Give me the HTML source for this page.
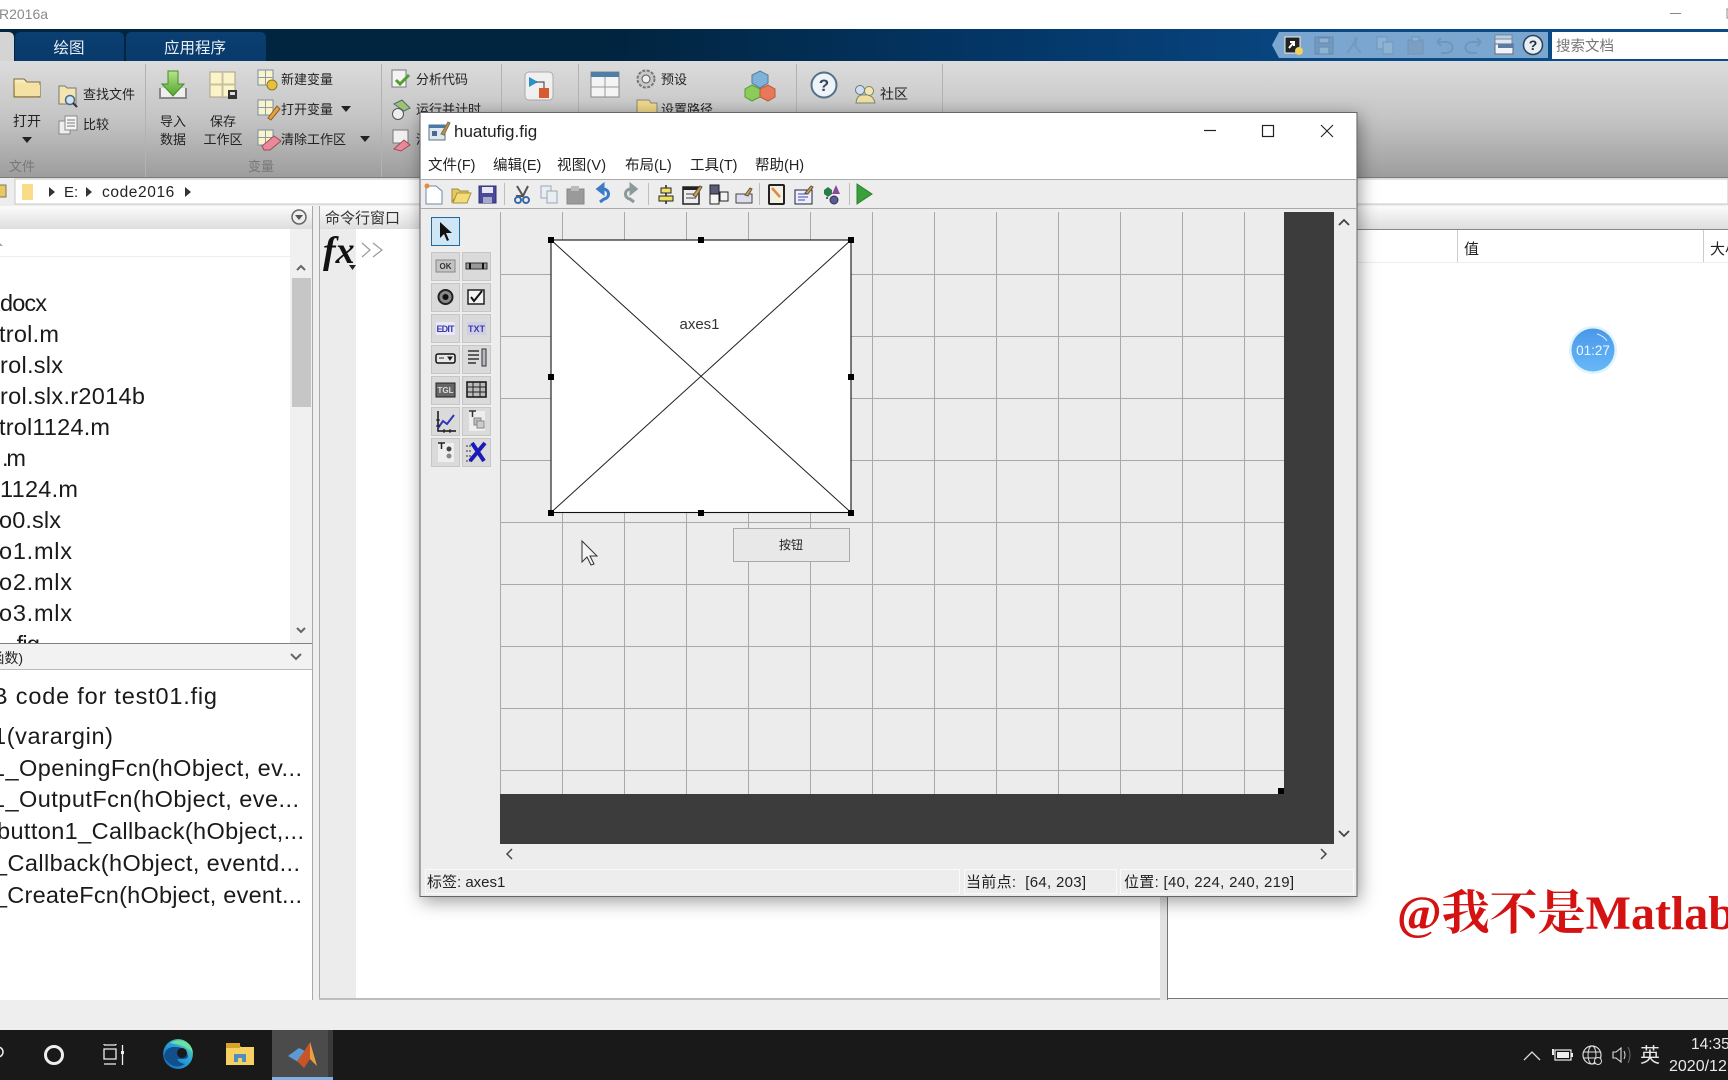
<!DOCTYPE html>
<html><head><meta charset="utf-8"><title>MATLAB R2016a</title>
<style>
html,body{margin:0;padding:0;width:1728px;height:1080px;overflow:hidden;background:#fff}
svg{display:block;position:absolute;left:0;top:0}
text{font-family:"Liberation Sans","Noto Sans CJK SC",sans-serif;fill:#222}
.r{font-size:13px;fill:#222}
.f{font-size:23.5px;fill:#1a1a1a}
.m{font-size:14.5px;fill:#222}
.s{font-size:15px;fill:#222}
.c{text-anchor:middle}
</style></head><body>
<svg width="1728" height="1080" viewBox="0 0 1728 1080" xmlns="http://www.w3.org/2000/svg">
<defs>
<linearGradient id="blue" x1="0" x2="1" y1="0" y2="0"><stop offset="0" stop-color="#01243f"/><stop offset=".35" stop-color="#01243f"/><stop offset=".6" stop-color="#04386a"/><stop offset=".8" stop-color="#0a4a87"/><stop offset="1" stop-color="#0a4a87"/></linearGradient>
<linearGradient id="rib" x1="0" x2="0" y1="0" y2="1"><stop offset="0" stop-color="#dcdcdc"/><stop offset=".5" stop-color="#c4c4c4"/><stop offset="1" stop-color="#9d9d9d"/></linearGradient>
<linearGradient id="hd" x1="0" x2="0" y1="0" y2="1"><stop offset="0" stop-color="#fbfbfb"/><stop offset="1" stop-color="#dedede"/></linearGradient>
<linearGradient id="tab" x1="0" x2="0" y1="0" y2="1"><stop offset="0" stop-color="#0b3f72"/><stop offset="1" stop-color="#083a6b"/></linearGradient>
<linearGradient id="yl" x1="0" x2="0" y1="0" y2="1"><stop offset="0" stop-color="#fdf3c4"/><stop offset="1" stop-color="#e0b85a"/></linearGradient>
<linearGradient id="gr" x1="0" x2="0" y1="0" y2="1"><stop offset="0" stop-color="#b7e58a"/><stop offset="1" stop-color="#4fa52d"/></linearGradient>
<linearGradient id="tm" x1="0" x2="0" y1="0" y2="1"><stop offset="0" stop-color="#4a97ea"/><stop offset="1" stop-color="#67b8f8"/></linearGradient>
<linearGradient id="edge" x1="0" x2="1" y1="1" y2="0"><stop offset="0" stop-color="#0f66b8"/><stop offset=".6" stop-color="#2da6d8"/><stop offset="1" stop-color="#72e08c"/></linearGradient>
<filter id="sh" x="-10%" y="-10%" width="120%" height="120%"><feDropShadow dx="2" dy="4" stdDeviation="9" flood-color="#000" flood-opacity=".4"/></filter>
<clipPath id="fl"><rect x="0" y="229" width="290" height="414"/></clipPath>
<clipPath id="fn"><rect x="0" y="670" width="312" height="330"/></clipPath>
<clipPath id="ed"><circle cx="178" cy="1054" r="15"/></clipPath>
</defs>

<!-- title bar -->
<rect width="1728" height="29" fill="#fff"/>
<text x="-1" y="19" font-size="14" style="fill:#8a8a8a">R2016a</text>
<rect x="1670" y="13" width="11" height="1" fill="#888"/>
<rect x="1727" y="9" width="3" height="9" fill="none" stroke="#888"/>

<!-- blue bar -->
<rect y="29" width="1728" height="32" fill="url(#blue)"/>
<path d="M-2 61V32H8Q14 32 14 38V61Z" fill="#d4d4d4"/>
<path d="M15 61V38Q15 32 21 32H118Q124 32 124 38V61Z" fill="url(#tab)"/>
<path d="M126 61V38Q126 32 132 32H260Q266 32 266 38V61Z" fill="url(#tab)"/>
<text x="69" y="53" font-size="15.5" class="c" style="fill:#e8eef5">绘图</text>
<text x="195" y="53" font-size="15.5" class="c" style="fill:#e8eef5">应用程序</text>

<!-- quick access -->
<path d="M1272 45L1279 32H1548V58H1279Z" fill="#7ba6cf"/>
<g>
<rect x="1285" y="37" width="15" height="16" fill="#222" stroke="#eee"/><path d="M1289 48l5-6m-4 0h4v4" stroke="#fff" stroke-width="2" fill="none"/><circle cx="1299" cy="51" r="4" fill="#f0d060"/>
<g opacity=".6">
<g fill="#6f93b5" stroke="#55789a"><rect x="1315" y="37" width="18" height="17"/><rect x="1319" y="38" width="10" height="5" fill="#9cbad6"/><rect x="1319" y="47" width="10" height="7" fill="#9cbad6"/></g>
<path d="M1347 53l6-8 3-7 1 0-2 8 6 7" stroke="#6f93b5" stroke-width="2" fill="none"/>
<g fill="#9cbad6" stroke="#6a8cae"><rect x="1377" y="37" width="10" height="12"/><rect x="1383" y="42" width="10" height="12"/></g>
<g fill="#7c9cbc" stroke="#6a8cae"><rect x="1408" y="40" width="15" height="14"/><rect x="1412" y="37" width="7" height="4" fill="#9cbad6"/></g>
<path d="M1437 42h9a6 5 0 0 1 0 11h-5M1437 42l4-4m-4 4l4 4" stroke="#6a8cae" stroke-width="2" fill="none"/>
<path d="M1481 42h-9a6 5 0 0 0 0 11h5M1481 42l-4-4m4 4l-4 4" stroke="#6a8cae" stroke-width="2" fill="none"/>
</g>
<rect x="1495" y="35" width="17" height="5" fill="#bcd0e4" stroke="#789"/><rect x="1495" y="39" width="17" height="6" fill="#dde8f2" stroke="#789"/><rect x="1495" y="44" width="18" height="10" fill="#eef3f8" stroke="#667"/><rect x="1498" y="44" width="15" height="4" fill="#5a7ca4"/>
<circle cx="1533" cy="45" r="9.5" fill="#e8eef4" stroke="#2c4258" stroke-width="1.5"/><text x="1533" y="50" font-size="14" font-weight="bold" class="c" style="fill:#1e2e40">?</text>
</g>
<rect x="1552" y="32" width="176" height="27" fill="#fff"/>
<text x="1556" y="51" font-size="14.5" style="fill:#777">搜索文档</text>

<!-- ribbon -->
<rect y="61" width="1728" height="116" fill="url(#rib)"/>
<g fill="#b2b2b2"><rect x="145" y="64" width="1" height="113"/><rect x="381" y="64" width="1" height="113"/><rect x="501" y="64" width="1" height="113"/><rect x="578" y="64" width="1" height="113"/><rect x="796" y="64" width="1" height="113"/><rect x="942" y="64" width="1" height="113"/></g>
<text x="22" y="171" class="r c" style="fill:#777">文件</text>
<text x="261" y="171" class="r c" style="fill:#777">变量</text>

<!-- 打开 -->
<path d="M14 79h10l3 3h13v15H14Z" fill="url(#yl)" stroke="#7a6a3a"/><rect x="15" y="85" width="25" height="11" fill="#f4e2a4"/>
<text x="27" y="126" class="r c" style="font-size:14px">打开</text>
<path d="M22 137h10l-5 6Z" fill="#222"/>
<!-- 查找文件 -->
<path d="M59 86h6l2 2h9v16H59Z" fill="#f4e4b0" stroke="#777"/><circle cx="70" cy="100" r="4.5" fill="#cfe4f4" stroke="#4a6a88" stroke-width="1.5"/><path d="M73 103l4 4" stroke="#333" stroke-width="2"/>
<text x="83" y="99" class="r">查找文件</text>
<!-- 比较 -->
<rect x="59" y="121" width="11" height="13" fill="#eee" stroke="#888"/><rect x="65" y="116" width="12" height="14" fill="#f6f6f6" stroke="#888"/><path d="M67 120h8M67 123h8M67 126h8" stroke="#777"/>
<text x="83" y="129" class="r">比较</text>
<!-- 导入数据 -->
<path d="M160 88v10h26V88" fill="#eee" stroke="#888" stroke-width="2"/><path d="M168 71h10v13h6l-11 12-11-12h6Z" fill="url(#gr)" stroke="#4a8a2a"/>
<text x="173" y="126" class="r c">导入</text><text x="173" y="144" class="r c">数据</text>
<!-- 保存 -->
<rect x="210" y="72" width="25" height="25" fill="#fbf4c8" stroke="#a8a08a"/><path d="M222.500 72v25M210 84.500h25" stroke="#c8c0a0" stroke-width="2"/><rect x="228" y="90" width="9" height="9" fill="#333"/><rect x="230" y="92" width="5" height="3" fill="#ddd"/>
<text x="223" y="126" class="r c">保存</text><text x="223" y="144" class="r c">工作区</text>
<!-- vars -->
<g fill="#fbf4c8" stroke="#7a8ea8"><rect x="258" y="70" width="15" height="15"/><rect x="258" y="100" width="15" height="15"/><rect x="258" y="130" width="15" height="15"/></g>
<path d="M265.500 70v15M258 77.500h15M265.500 100v15M258 107.500h15M265.500 130v15M258 137.500h15" stroke="#8a9ab0"/>
<circle cx="272" cy="85" r="5" fill="#e8c040" stroke="#8a7a20"/>
<path d="M268 118l9-12 3 3-9 11Z" fill="#e8a040" stroke="#8a6020"/>
<path d="M262 146l12-10 7 5-11 9h-6Z" fill="#e88a9a" stroke="#a04a5a"/>
<text x="281" y="84" class="r">新建变量</text>
<text x="281" y="114" class="r">打开变量</text>
<text x="281" y="144" class="r">清除工作区</text>
<path d="M341 106h10l-5 6Z" fill="#222"/><path d="M360 136h10l-5 6Z" fill="#222"/>
<!-- code -->
<rect x="392" y="70" width="14" height="17" fill="#f4f4f4" stroke="#777"/><path d="M396 80l4 4 9-9" stroke="#50a030" stroke-width="3" fill="none"/>
<path d="M394 104l8-4 8 8-6 3Z" fill="#9cc470" stroke="#567"/><circle cx="398" cy="114" r="5.500" fill="#eee" stroke="#555"/>
<rect x="393" y="130" width="15" height="13" fill="#f0f0f0" stroke="#777"/><path d="M394 149l10-9 6 5-9 6Z" fill="#e88a9a" stroke="#a04a5a"/>
<text x="416" y="84" class="r">分析代码</text>
<text x="416" y="114" class="r">运行并计时</text>
<text x="416" y="144" class="r">清除命令</text>
<!-- simulink -->
<rect x="525" y="72" width="28" height="28" rx="4" fill="#f0f0f0" stroke="#aaa"/><path d="M529 77l9 5-9 5Z" fill="#2a90c8"/><path d="M536 82h8v6" stroke="#333" fill="none"/><rect x="539" y="88" width="10" height="10" fill="#d85a30"/>
<!-- layout -->
<rect x="591" y="72" width="28" height="25" fill="#f4f4f4" stroke="#888"/><rect x="591" y="72" width="28" height="5" fill="#4f7ea8"/><path d="M605 77v20M591 87h28" stroke="#999"/>
<!-- prefs -->
<circle cx="646" cy="79" r="8.500" fill="#c8c8c8" stroke="#777" stroke-width="2" stroke-dasharray="3 1.500"/><circle cx="646" cy="79" r="4" fill="#eee" stroke="#555"/>
<text x="661" y="84" class="r">预设</text>
<path d="M637 100h12l2 3h6v10h-20Z" fill="#f0d88a" stroke="#887"/>
<text x="661" y="114" class="r">设置路径</text>
<!-- cubes -->
<path d="M760 71l8 4v8l-8 5-8-5v-8Z" fill="#7fb2d8" stroke="#57789a"/><path d="M752 85l8 4v8l-8 4-7-4v-8Z" fill="#8ccc58" stroke="#589a38"/><path d="M768 85l7 4v8l-7 4-8-4v-8Z" fill="#e8785a" stroke="#b8583a"/>
<!-- help -->
<circle cx="824" cy="85" r="12.500" fill="#eef3f7" stroke="#54708a" stroke-width="2"/><text x="824" y="91" font-size="17" font-weight="bold" class="c" style="fill:#33475c">?</text>
<!-- community -->
<circle cx="860" cy="90" r="4.500" fill="#cfe0f0" stroke="#678"/><circle cx="869" cy="91" r="4.500" fill="#f4e4b0" stroke="#786"/><path d="M856 103q1-9 8-8 9-1 11 8Z" fill="#f0e0a0" stroke="#787"/>
<text x="880" y="99" class="r" style="font-size:14px">社区</text>

<!-- address bar -->
<rect y="177" width="1728" height="1" fill="#7c7c7c"/>
<rect y="178" width="1728" height="28" fill="#ededed"/>
<rect x="15" y="179" width="1713" height="25" fill="#fff" stroke="#c8c8c8"/>
<rect x="-6" y="185" width="12" height="12" fill="#e8c860" stroke="#776"/>
<rect x="22" y="184" width="11" height="16" fill="#f8dc88"/>
<path d="M49 187l6 5-6 5Z M86 187l6 5-6 5Z M185 187l6 5-6 5Z" fill="#333"/>
<text x="64" y="197" font-size="15" style="fill:#222">E:</text>
<text x="102" y="197" font-size="15.5" letter-spacing=".6" style="fill:#222">code2016</text>

<!-- background area -->
<rect y="206" width="1728" height="824" fill="#efefef"/>

<!-- left pane -->
<rect y="206" width="312" height="23" fill="url(#hd)"/>
<rect y="229" width="312" height="771" fill="#fff"/>
<rect x="312" y="206" width="1" height="794" fill="#a8a8a8"/>
<circle cx="299" cy="217" r="7" fill="#eee" stroke="#666" stroke-width="1.500"/><path d="M295 215h8l-4 5Z" fill="#555"/>
<rect x="290" y="229" width="22" height="414" fill="#f0f0f0"/>
<rect y="256" width="292" height="1" fill="#eee"/>
<rect x="292" y="278" width="19" height="129" fill="#c6c6c6"/>
<path d="M297 270l4-4 4 4M297 628l4 4 4-4" stroke="#666" stroke-width="2" fill="none"/>
<path d="M0 243l3 3h-3Z" fill="#aaa"/>
<g clip-path="url(#fl)">
<text x="0" y="311" class="f" textLength="47">docx</text>
<text x="-1" y="342" class="f" textLength="60">trol.m</text>
<text x="0" y="373" class="f" textLength="63">rol.slx</text>
<text x="0" y="404" class="f" textLength="145">rol.slx.r2014b</text>
<text x="-1" y="435" class="f" textLength="111">trol1124.m</text>
<text x="2" y="466" class="f" textLength="24">.m</text>
<text x="0" y="497" class="f" textLength="78">1124.m</text>
<text x="-1" y="528" class="f" textLength="62">o0.slx</text>
<text x="-1" y="559" class="f" textLength="73">o1.mlx</text>
<text x="-1" y="590" class="f" textLength="73">o2.mlx</text>
<text x="-1" y="621" class="f" textLength="73">o3.mlx</text>
<text x="5" y="652" class="f" textLength="35">. fig</text>
</g>
<rect y="643" width="312" height="1" fill="#808080"/>
<rect y="644" width="312" height="25" fill="#f2f2f2"/>
<rect y="669" width="312" height="1" fill="#bbb"/>
<text x="23" y="663" font-size="14" text-anchor="end">函数)</text>
<path d="M291 654l5 5 5-5" stroke="#666" stroke-width="2" fill="none"/>
<g clip-path="url(#fn)">
<text x="-8" y="704" class="f" textLength="225">B code for test01.fig</text>
<text x="-7" y="744" class="f" textLength="120">1(varargin)</text>
<text x="-8" y="776" class="f" textLength="310">1_OpeningFcn(hObject, ev...</text>
<text x="-8" y="807" class="f" textLength="307">1_OutputFcn(hObject, eve...</text>
<text x="-3" y="839" class="f" textLength="307">button1_Callback(hObject,...</text>
<text x="-6" y="871" class="f" textLength="306">_Callback(hObject, eventd...</text>
<text x="-6" y="903" class="f" textLength="308">_CreateFcn(hObject, event...</text>
</g>
<rect y="1000" width="1728" height="30" fill="#eee"/>

<!-- command window -->
<rect x="319" y="206" width="841" height="23" fill="url(#hd)"/>
<rect x="319" y="206" width="1" height="794" fill="#aaa"/>
<text x="325" y="223" class="s" style="fill:#333">命令行窗口</text>
<rect x="320" y="229" width="36" height="771" fill="#ececec"/>
<rect x="356" y="229" width="804" height="771" fill="#fff"/>
<text x="323" y="263" font-size="38" font-weight="bold" font-style="italic" style="font-family:'Liberation Serif',serif;fill:#111">fx</text>
<path d="M349 265h7l-3.500 5Z" fill="#222"/>
<path d="M362 243l8 7-8 7M373 243l9 7-9 7" stroke="#9a9a9a" stroke-width="1.200" fill="none"/>
<rect x="1160" y="206" width="7" height="794" fill="#e2e2e2"/>
<rect x="319" y="998" width="841" height="2" fill="#bdbdbd"/>

<!-- workspace -->
<rect x="1167" y="206" width="561" height="23" fill="url(#hd)"/>
<rect x="1167" y="229" width="561" height="1" fill="#888"/>
<rect x="1167" y="230" width="561" height="768" fill="#fff"/>
<rect x="1167" y="206" width="1" height="794" fill="#777"/>
<rect x="1167" y="998" width="561" height="1" fill="#777"/>
<rect x="1167" y="262" width="561" height="1" fill="#eee"/>
<rect x="1457" y="230" width="1" height="32" fill="#ccc"/>
<rect x="1703" y="230" width="1" height="32" fill="#ccc"/>
<text x="1464" y="254" class="s">值</text>
<text x="1710" y="254" class="s">大小</text>

<!-- timer -->
<circle cx="1593" cy="350" r="24" fill="#dff4fb"/>
<circle cx="1593" cy="350" r="21.500" fill="url(#tm)"/>
<path d="M1597 334q7 2 10 7" stroke="#d8ecfc" stroke-width="1" fill="none"/>
<text x="1593" y="355" font-size="13.500" class="c" style="fill:#eef8ff">01:27</text>

<!-- watermark -->
<text x="1397" y="929" font-size="48" font-weight="bold" style="font-family:'Liberation Serif','Noto Serif CJK SC',serif;fill:#d41212">@我不是Matlab</text>

<!-- dialog -->
<rect x="420" y="112.500" width="937" height="784" fill="#ededed" stroke="#666" filter="url(#sh)"/>
<rect x="421" y="113" width="935" height="66" fill="#fff"/>
<rect x="421" y="179" width="935" height="1" fill="#aaa"/>
<rect x="421" y="208" width="935" height="1" fill="#aaa"/>
<!-- title icon -->
<rect x="429" y="125" width="16" height="15" fill="#dfe8f0" stroke="#56708a"/><rect x="429" y="125" width="16" height="3" fill="#4a78a8"/><rect x="432" y="131" width="5" height="5" fill="#4a6a8a"/><path d="M441 134l7-12 2 1-6 12Z" fill="#c88a40" stroke="#775"/>
<text x="454" y="137" font-size="17" style="fill:#222">huatufig.fig</text>
<path d="M1204 130.500h12" stroke="#222" stroke-width="1.200"/>
<rect x="1262.500" y="125.500" width="11" height="11" fill="none" stroke="#222" stroke-width="1.200"/>
<path d="M1321 125l12 12M1333 125l-12 12" stroke="#222" stroke-width="1.100"/>
<!-- menu -->
<text x="428" y="170" class="m">文件(F)</text>
<text x="493" y="170" class="m">编辑(E)</text>
<text x="557" y="170" class="m" letter-spacing=".2">视图(V)</text>
<text x="625" y="170" class="m">布局(L)</text>
<text x="690" y="170" class="m">工具(T)</text>
<text x="755" y="170" class="m">帮助(H)</text>
<!-- toolbar -->
<g fill="#bdbdbd"><rect x="504" y="183" width="1" height="22"/><rect x="648" y="183" width="1" height="22"/><rect x="759" y="183" width="1" height="22"/><rect x="849" y="183" width="1" height="22"/></g>
<path d="M426 186h10l6 5v13h-16Z" fill="#fff" stroke="#6a8aaa"/><circle cx="427" cy="186" r="2.500" fill="#e88a3a"/>
<path d="M452 189h6l2 2h8v3h-10l-6 8Z" fill="#e8c860" stroke="#9a8a40"/><path d="M453 203l4-10h14l-4 10Z" fill="#f4dc78" stroke="#a8903a"/>
<rect x="479" y="186" width="17" height="17" fill="#4a4a9a" stroke="#303070"/><rect x="482" y="187" width="11" height="6" fill="#e8e8f4"/><rect x="483" y="197" width="9" height="6" fill="#a8a8c8"/>
<path d="M517 186l6 10 5-10M516 196l7 0" stroke="#555" stroke-width="2" fill="none"/><circle cx="518" cy="200" r="3" fill="none" stroke="#3a6aa8" stroke-width="2"/><circle cx="526" cy="200" r="3" fill="none" stroke="#3a6aa8" stroke-width="2"/>
<g fill="#e8eef4" stroke="#9aa8b4"><rect x="541" y="186" width="10" height="12"/><rect x="547" y="191" width="10" height="12"/></g>
<rect x="567" y="189" width="17" height="15" fill="#9a9a9a" stroke="#888"/><rect x="571" y="186" width="8" height="5" fill="#bbb"/>
<path d="M598 189h5a5 5 0 0 1 1 10l-4 3M598 189l5-4v8Z" stroke="#3a7ac8" stroke-width="3" fill="none"/>
<path d="M636 189h-5a5 5 0 0 0-1 10l4 3M636 189l-5-4v8Z" stroke="#8a9a9a" stroke-width="3" fill="none"/>
<path d="M666 185v19" stroke="#222" stroke-width="1.500"/><rect x="661" y="188" width="10" height="5" fill="#f0e060" stroke="#222"/><rect x="659" y="196" width="14" height="5" fill="#f0e060" stroke="#222"/>
<rect x="683" y="187" width="16" height="17" fill="#eee" stroke="#222" stroke-width="1.500"/><rect x="683" y="187" width="16" height="3" fill="#222"/><path d="M686 194h10M686 198h10" stroke="#444"/><path d="M693 195l7-9 2 1-6 10Z" fill="#c8a050" stroke="#654"/>
<rect x="710" y="185" width="9" height="9" fill="#5a5a7a" stroke="#222"/><rect x="710" y="194" width="9" height="10" fill="#f4f4f4" stroke="#222"/><rect x="720" y="192" width="8" height="9" fill="#f4f4f4" stroke="#222"/>
<rect x="736" y="194" width="16" height="9" fill="#dde" stroke="#444"/><path d="M745 195l5-7 2 1-4 7Z" fill="#c8a050" stroke="#654"/>
<rect x="769" y="185" width="15" height="19" rx="1" fill="#f4f0e0" stroke="#222" stroke-width="2"/><path d="M772 188l8 9" stroke="#d88a4a" stroke-width="2.500"/>
<rect x="795" y="190" width="17" height="14" fill="#eef" stroke="#223"/><path d="M798 194h10M798 197h10M798 200h7" stroke="#3a4aa8"/><path d="M805 193l6-7 2 1-5 7Z" fill="#c8a050" stroke="#654"/>
<path d="M824 190l4-3 4 3v4l-4 3-4-3Z" fill="#2a7a4a"/><path d="M836 185l4 9h-8Z" fill="#8a4a9a"/><circle cx="834" cy="200" r="4" fill="#5a5a9a" stroke="#334"/><circle cx="827" cy="198" r="1" fill="#333"/>
<path d="M857 184l15 10-15 10Z" fill="#3aa03a" stroke="#2a802a"/>

<!-- palette -->
<rect x="431.500" y="217.500" width="28" height="28" fill="#cfe6f7" stroke="#1f6a9a"/>
<path d="M440 222v16l4-4 3 7 2-1-3-7h6Z" fill="#111"/>
<g fill="#dadada" stroke="#c6c6c6">
<rect x="431.500" y="252.500" width="28" height="28"/><rect x="462.500" y="252.500" width="28" height="28"/>
<rect x="431.500" y="283.500" width="28" height="28"/><rect x="462.500" y="283.500" width="28" height="28"/>
<rect x="431.500" y="314.500" width="28" height="28"/><rect x="462.500" y="314.500" width="28" height="28"/>
<rect x="431.500" y="345.500" width="28" height="28"/><rect x="462.500" y="345.500" width="28" height="28"/>
<rect x="431.500" y="376.500" width="28" height="28"/><rect x="462.500" y="376.500" width="28" height="28"/>
<rect x="431.500" y="407.500" width="28" height="28"/><rect x="462.500" y="407.500" width="28" height="28"/>
<rect x="431.500" y="438.500" width="28" height="28"/><rect x="462.500" y="438.500" width="28" height="28"/>
</g>
<rect x="436" y="260" width="19" height="12" fill="#c4c4c4" stroke="#888"/><text x="445.500" y="269" font-size="8" font-weight="bold" class="c" style="fill:#333">OK</text>
<rect x="466" y="263" width="21" height="6" fill="#999" stroke="#333"/><path d="M470 263v6M483 263v6" stroke="#111" stroke-width="2"/>
<circle cx="445.500" cy="297" r="7" fill="#888" stroke="#222" stroke-width="2"/><circle cx="445.500" cy="297" r="3" fill="#111"/>
<rect x="468" y="290" width="16" height="14" fill="#f4f4f4" stroke="#222" stroke-width="1.500"/><path d="M471 297l3 4 8-10" stroke="#111" stroke-width="2" fill="none"/>
<rect x="436" y="322" width="19" height="13" fill="#e8e8f8"/><text x="445.500" y="332" font-size="9" font-weight="bold" textLength="18" class="c" style="fill:#3a3aa8">EDIT</text>
<rect x="467" y="322" width="19" height="13" fill="#cfcfe4"/><text x="476.500" y="332" font-size="9" font-weight="bold" class="c" style="fill:#3a3aa8">TXT</text>
<rect x="436" y="354" width="19" height="9" rx="2" fill="#e8e8e8" stroke="#111" stroke-width="1.500"/><path d="M439 358h5M448 357h4l-2 3Z" stroke="#222"/>
<path d="M468 351h11M468 355h11M468 359h11M468 363h8" stroke="#333" stroke-width="1.500"/><rect x="482" y="349" width="4" height="17" fill="#b8b8c8" stroke="#333"/>
<rect x="436" y="383" width="19" height="14" fill="#666" stroke="#222"/><text x="445.500" y="393" font-size="8" font-weight="bold" class="c" style="fill:#ddd">TGL</text>
<rect x="467" y="382" width="19" height="15" fill="#bbb" stroke="#111" stroke-width="1.500"/><path d="M467 387h19M467 392h19M473 382v15M480 382v15" stroke="#222"/>
<path d="M438 411v20h18" stroke="#111" stroke-width="1.500" fill="none"/><path d="M438 428l5-7 4 3 7-9" stroke="#2a3ab8" stroke-width="2" fill="none"/><path d="M436 426h4M436 420h4M444 429v4M450 429v4" stroke="#111"/>
<rect x="469" y="411" width="16" height="20" fill="#eee"/><path d="M469 411h7M472.500 411v6" stroke="#333" stroke-width="1.500"/><rect x="474" y="418" width="7" height="7" fill="#bbb" stroke="#888"/><rect x="477" y="421" width="7" height="7" fill="#ccc" stroke="#888"/>
<rect x="438" y="443" width="16" height="19" fill="#eee"/><path d="M438 443h7M441.500 443v6" stroke="#222" stroke-width="1.500"/><circle cx="449" cy="449" r="2.500" fill="#444"/><circle cx="449" cy="456" r="2.500" fill="#888"/>
<path d="M466 446h6M466 451h5M466 456h5M466 461h5" stroke="#333" stroke-dasharray="2 1"/><path d="M472 443l12 18M485 443l-15 18" stroke="#1a1ab8" stroke-width="4"/>

<!-- grid -->
<rect x="500.500" y="212" width="784" height="582" fill="#ececec"/>
<g stroke="#a9a9a9">
<path d="M500.500 212V794M562.500 212V794M624.500 212V794M686.500 212V794M748.500 212V794M810.500 212V794M872.500 212V794M934.500 212V794M996.500 212V794M1058.500 212V794M1120.500 212V794M1182.500 212V794M1244.500 212V794"/>
<path d="M500 274.500H1284M500 336.500H1284M500 398.500H1284M500 460.500H1284M500 522.500H1284M500 584.500H1284M500 646.500H1284M500 708.500H1284M500 770.500H1284"/>
</g>
<rect x="1284" y="212" width="50" height="632" fill="#3c3c3c"/>
<rect x="500" y="794" width="834" height="50" fill="#3c3c3c"/>
<rect x="1278" y="788" width="6" height="6" fill="#000"/>
<path d="M1339 225l5-5 5 5M1339 831l5 5 5-5" stroke="#444" stroke-width="1.800" fill="none"/>
<path d="M512 849l-5 5 5 5M1321 849l5 5-5 5" stroke="#444" stroke-width="1.500" fill="none"/>

<!-- axes -->
<rect x="551" y="240" width="300" height="272.500" fill="#fff" stroke="#111" stroke-width="1.100"/>
<path d="M551 240L851 512.500M851 240L551 512.500" stroke="#222" stroke-width="1"/>
<text x="699.500" y="329" font-size="15" class="c" style="fill:#333">axes1</text>
<g fill="#000"><rect x="548" y="237" width="6" height="6"/><rect x="698" y="237" width="6" height="6"/><rect x="848" y="237" width="6" height="6"/><rect x="548" y="374" width="6" height="6"/><rect x="848" y="374" width="6" height="6"/><rect x="548" y="510" width="6" height="6"/><rect x="698" y="510" width="6" height="6"/><rect x="848" y="510" width="6" height="6"/></g>
<!-- button -->
<rect x="733.500" y="528.500" width="116" height="33" fill="#e8e8e8" stroke="#aaa"/>
<text x="791" y="549" font-size="12" class="c" style="fill:#222">按钮</text>
<!-- cursor -->
<path d="M582 541v21l5-5 4 8 3-1-4-8h7Z" fill="#f4f4f4" stroke="#333"/>

<!-- status bar -->
<g fill="#ededed" stroke="#fafafa"><rect x="425.500" y="869.500" width="534" height="24"/><rect x="964.500" y="869.500" width="152" height="24"/><rect x="1120.500" y="869.500" width="233" height="24"/></g>
<text x="427" y="887" class="s">标签: axes1</text>
<text x="966" y="887" class="s" letter-spacing=".3">当前点:&#160; [64, 203]</text>
<text x="1124" y="887" class="s" letter-spacing=".3">位置: [40, 224, 240, 219]</text>

<!-- taskbar -->
<rect y="1030" width="1728" height="50" fill="#191919"/>
<circle cx="-2" cy="1052" r="5" fill="none" stroke="#eee" stroke-width="1.500"/>
<circle cx="54" cy="1055" r="8.500" fill="none" stroke="#eee" stroke-width="3"/>
<path d="M104 1045h12M104 1064h12M104 1049h12v10h-12ZM104 1045v-1M116 1045v-1" stroke="#eee" stroke-width="1.300" fill="none"/><path d="M122.500 1045v20" stroke="#eee" stroke-width="1.300"/><rect x="121" y="1051" width="3" height="3" fill="#eee"/>
<g clip-path="url(#ed)"><circle cx="178" cy="1054" r="15" fill="url(#edge)"/><path d="M164 1056q2-10 12-9 10 0 12 9 0 3-5 3h-6q2 4 8 5-8 5-15 0-6-5-6-8Z" fill="#11508c"/><circle cx="182" cy="1053" r="5" fill="#191919"/><path d="M170 1043q10-6 20 2 3 3 3 8-7-8-23-10Z" fill="#6ce0a0"/></g>
<path d="M226 1044h12l3 3h13v18h-28Z" fill="#f6d060"/><rect x="226" y="1043" width="14" height="5" fill="#d8a32a"/><path d="M234 1054h12v8h-12Z" fill="#4f8fc0"/><rect x="238" y="1058" width="4" height="7" fill="#f6d060"/>
<rect x="272" y="1030" width="61" height="50" fill="#4b4b4b"/><rect x="272" y="1077" width="61" height="3" fill="#7fb1e0"/>
<rect x="328" y="1030" width="5" height="47" fill="#3a3a3a"/>
<path d="M288 1056l11-8 6 3-7 11Z" fill="#5a9bd4"/><path d="M297 1061l8-11 5-8 7 24-7-7-6 9Z" fill="#c8552a"/><path d="M310 1042l7 24-7-7Z" fill="#e8a040"/>
<path d="M1524 1060l8-8 8 8" stroke="#ddd" stroke-width="1.300" fill="none"/>
<rect x="1555" y="1050" width="16" height="10" fill="#111" stroke="#eee" stroke-width="1.200"/><rect x="1557" y="1052" width="12" height="6" fill="#eee"/><rect x="1571" y="1053" width="2" height="4" fill="#eee"/><path d="M1553 1049v6" stroke="#eee" stroke-width="2"/>
<circle cx="1592" cy="1055" r="9" fill="none" stroke="#ddd" stroke-width="1.200"/><ellipse cx="1592" cy="1055" rx="4" ry="9" fill="none" stroke="#ddd"/><path d="M1583 1052h18M1583 1058h18" stroke="#ddd"/><circle cx="1598" cy="1061" r="3.500" fill="#191919" stroke="#ddd"/>
<path d="M1613 1052h3l5-4v14l-5-4h-3Z" fill="none" stroke="#ddd" stroke-width="1.100"/><path d="M1624 1051q2 4 0 8" stroke="#ddd" fill="none"/><path d="M1628 1047q4 8 0 16" stroke="#666" fill="none"/>
<text x="1650" y="1062" font-size="20" class="c" style="fill:#e8e8e8">英</text>
<text x="1691" y="1049" font-size="15.500" style="fill:#e8e8e8">14:35</text>
<text x="1669" y="1071" font-size="16" style="fill:#e8e8e8">2020/12</text>
</svg>
</body></html>
